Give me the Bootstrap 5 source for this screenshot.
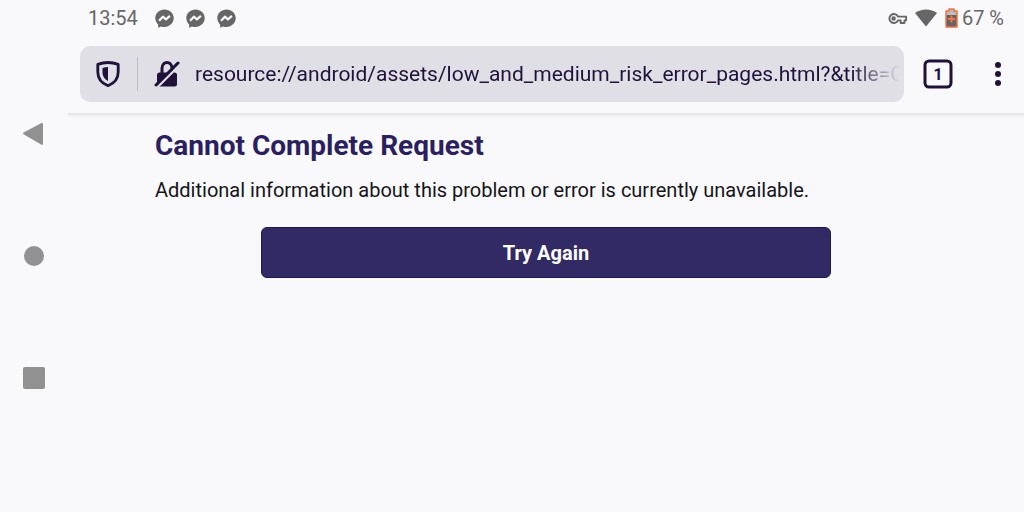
<!DOCTYPE html>
<html lang="en">
<head>
<meta charset="utf-8">
<meta name="viewport" content="width=device-width, initial-scale=1">
<title>Cannot Complete Request</title>
<link href="https://cdn.jsdelivr.net/npm/bootstrap@5.3.0/dist/css/bootstrap.min.css" rel="stylesheet">
<style>
  body { font-family: Roboto, "Liberation Sans", sans-serif; background: #f9f9fb; color: #15141a; }
  svg { display: block; flex: none; }
  .plain-btn { background: none; border: 0; padding: 0; color: inherit; display: flex; align-items: center; justify-content: center; }
  .system-nav { width: 68px; gap: 88px; color: #919191; }
  .system-nav .plain-btn { width: 34px; height: 34px; }
  .status-bar { height: 36px; padding: 0 20px; font-size: 20px; line-height: 36px; color: #666; }
  .notices { gap: 12px; margin-left: 17px; }
  .browser-bar { padding: 10px 12px 11px; color: #20123a; border-bottom: 2px solid #e6e6e8; box-shadow: 0 2px 3px #f0f0f2; }
  .address { height: 56px; border-radius: 10px; background: #e0dfe6; padding: 0 4px 0 12px; min-width: 0; }
  .address .plain-btn { width: 32px; height: 40px; }
  .divider { width: 1px; height: 34px; background: #bebdc6; margin: 0 13px; }
  .address-input { border: 0; outline: 0; background: none; padding: 0; min-width: 0; margin-left: 12px; font-size: 21px; line-height: 30px; color: #20123a;
    -webkit-mask-image: linear-gradient(to left, transparent, #000 50px); mask-image: linear-gradient(to left, transparent, #000 50px); }
  .tabs-btn { width: 30px; height: 30px; margin-left: 19px; }
  .menu-btn { width: 30px; height: 40px; margin: 0 -1px 0 30px; }
  .error-page { padding: 14px 87px; }
  .error-title { font-size: 28px; line-height: 34px; font-weight: 700; color: #2a1f61; margin-bottom: 13px; }
  .error-text { font-size: 20px; line-height: 28px; margin-bottom: 23px; }
  .retry { width: 73%; height: 51px; background: #312a65; border: 1px solid #20175a; border-radius: 6px; color: #fff; font-size: 20px; font-weight: 700; padding: 0; }
  .retry:hover { background: #20175a; color: #fff; }
</style>
</head>
<body>
<svg class="d-none" aria-hidden="true">
  <symbol id="chat" viewBox="0 0 20 20">
    <path fill="#666" d="M10 .5C4.600.5.300 4.500.300 9.600c0 2.700 1.100 5 3 6.700v3.500l3-1.500c1.100.4 2.400.6 3.700.6 5.400 0 9.700-4.200 9.700-9.300S15.400.5 10 .5z"/>
    <path fill="none" stroke="#f9f9fb" stroke-width="2.400" stroke-linejoin="round" d="M4.300 12.300l4-4.200 3.200 2.700 4.200-3.500"/>
  </symbol>
</svg>
<div class="d-flex min-vh-100">
  <nav class="system-nav d-flex flex-column align-items-center justify-content-center flex-shrink-0" aria-label="System">
    <button class="plain-btn" type="button" aria-label="Back"><svg width="24" height="24" viewBox="0 0 24 24"><path d="M2 11.500 L20 2 V22 Z" fill="currentColor" stroke="currentColor" stroke-width="2" stroke-linejoin="round"/></svg></button>
    <button class="plain-btn" type="button" aria-label="Home"><svg width="20" height="20" viewBox="0 0 20 20"><circle cx="10" cy="10" r="10" fill="currentColor"/></svg></button>
    <button class="plain-btn" type="button" aria-label="Recent apps"><svg width="22" height="22" viewBox="0 0 22 22"><rect width="22" height="22" rx="2" fill="currentColor"/></svg></button>
  </nav>
  <div class="flex-grow-1 overflow-hidden">
    <div class="status-bar d-flex align-items-center">
      <span>13:54</span>
      <div class="notices d-flex">
        <svg width="19" height="19"><use href="#chat"/></svg>
        <svg width="19" height="19"><use href="#chat"/></svg>
        <svg width="19" height="19"><use href="#chat"/></svg>
      </div>
      <div class="d-flex align-items-center ms-auto">
        <svg width="19" height="13" viewBox="0 0 18 12" fill="none" stroke="#666" stroke-width="1.800" stroke-linejoin="round"><path d="M9.500 4.200A4.300 4.300 0 1 0 9.500 7.800H12V10.200H15.600V7.800H17.200V4.200Z"/><circle cx="5.300" cy="6" r="1.200"/></svg>
        <svg class="ms-2" width="22" height="18" viewBox="0 0 22 18"><path d="M0 4C6-.7 16-.7 22 4L11 17.500Z" fill="#666"/></svg>
        <svg class="ms-2" width="13" height="20" viewBox="0 0 13 20"><path d="M1 3H4V1H9V3H12V19H1Z" fill="#bdbdbd"/><path d="M1 7H12V19H1Z" fill="#606468"/><path d="M1 3H4V1H9V3H12V19H1Z" fill="none" stroke="#f4703f" stroke-width="1.500" stroke-linejoin="round"/><path d="M6.500 7.500V14.500M3 11H10" stroke="#ff7043" stroke-width="1.800"/></svg>
        <span class="ms-1">67 %</span>
      </div>
    </div>
    <header class="browser-bar d-flex align-items-center">
      <div class="address d-flex align-items-center flex-grow-1">
        <button class="plain-btn" type="button" aria-label="Tracking protection"><svg width="24" height="26" viewBox="0 0 24 26"><path d="M12 1.500C15 1.500 19 2.200 22.200 3.400V11C22.200 18 18.500 22.200 12 24.700C5.500 22.200 1.800 18 1.800 11V3.400C5 2.200 9 1.500 12 1.500Z" fill="none" stroke="currentColor" stroke-width="2.800" stroke-linejoin="round"/><path d="M12 6V20C8.500 18.200 6.500 15.500 6.500 11.500V7Q9 6.200 12 6Z" fill="currentColor"/></svg></button>
        <span class="divider"></span>
        <button class="plain-btn" type="button" aria-label="Connection is not secure"><svg width="26" height="28" viewBox="0 0 26 28"><path d="M8 14V8.500C8 .5 18 .5 18 8.500V14" fill="none" stroke="currentColor" stroke-width="3"/><rect x="3" y="12.500" width="20" height="14" rx="2.500" fill="currentColor"/><path d="M3.300 27.300L26.300 4.300" stroke="#e0dfe6" stroke-width="2.400"/><path d="M2 25L24 3" stroke="currentColor" stroke-width="3" stroke-linecap="round"/></svg></button>
        <input class="address-input flex-grow-1" type="text" aria-label="Address" spellcheck="false" value="resource://android/assets/low_and_medium_risk_error_pages.html?&amp;title=Cannot">
      </div>
      <button class="plain-btn tabs-btn" type="button" aria-label="1 open tab"><svg width="30" height="30" viewBox="0 0 30 30"><rect x="2" y="2" width="26" height="26" rx="4" fill="none" stroke="currentColor" stroke-width="3"/><text x="15" y="21" text-anchor="middle" font-size="16" font-weight="700" fill="currentColor">1</text></svg></button>
      <button class="plain-btn menu-btn" type="button" aria-label="Menu"><svg width="6" height="24" viewBox="0 0 6 24" fill="currentColor"><circle cx="3" cy="3" r="3"/><circle cx="3" cy="12" r="3"/><circle cx="3" cy="21" r="3"/></svg></button>
    </header>
    <main class="error-page">
      <h1 class="error-title">Cannot Complete Request</h1>
      <p class="error-text">Additional information about this problem or error is currently unavailable.</p>
      <button class="btn retry d-block mx-auto" type="button">Try Again</button>
    </main>
  </div>
</div>
<script src="https://cdn.jsdelivr.net/npm/bootstrap@5.3.0/dist/js/bootstrap.bundle.min.js"></script>
</body>
</html>
